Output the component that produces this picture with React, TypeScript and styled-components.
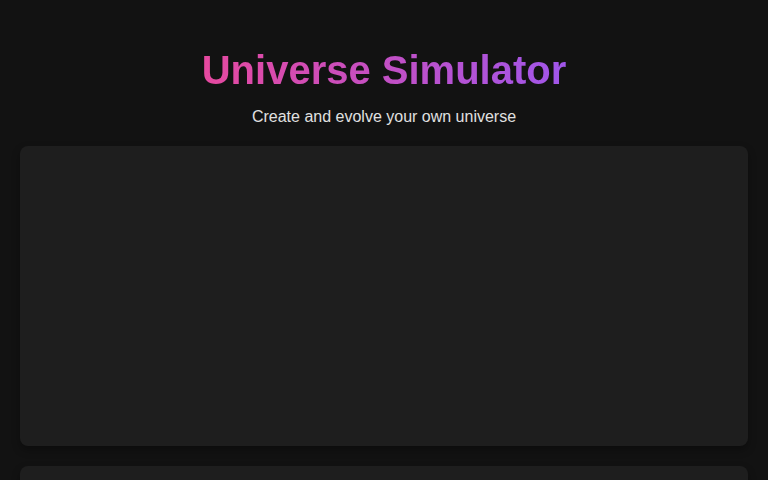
import styled, { createGlobalStyle } from 'styled-components'

const GlobalStyle = createGlobalStyle`
  body {
    margin: 0;
    background: #121212;
    color: #e0e0e0;
    font-family: 'Liberation Sans', Arial, sans-serif;
  }
`

const Container = styled.div`
  padding: 20px;
  display: flex;
  flex-direction: column;
  gap: 20px;
`

const Header = styled.header`
  text-align: center;
`

const Title = styled.h1`
  margin: 28px 0 15px;
  font-size: 40px;
  font-weight: 700;
  background: linear-gradient(90deg, #e6499f, #a056ea);
  -webkit-background-clip: text;
  background-clip: text;
  color: transparent;
  display: inline-block;
`

const Subtitle = styled.p`
  margin: 0;
  font-size: 16px;
  color: #e0e0e0;
`

const Panel = styled.section<{ $height: number }>`
  height: ${(p) => p.$height}px;
  background: #1e1e1e;
  border-radius: 8px;
  box-shadow: 0 4px 8px rgba(0, 0, 0, 0.3);
`

const App = () => {
  return (
    <>
      <GlobalStyle />
      <Container>
        <Header>
          <Title>Universe Simulator</Title>
          <Subtitle>Create and evolve your own universe</Subtitle>
        </Header>
        <Panel $height={300} />
        <Panel $height={200} />
      </Container>
    </>
  )
}

export default App
